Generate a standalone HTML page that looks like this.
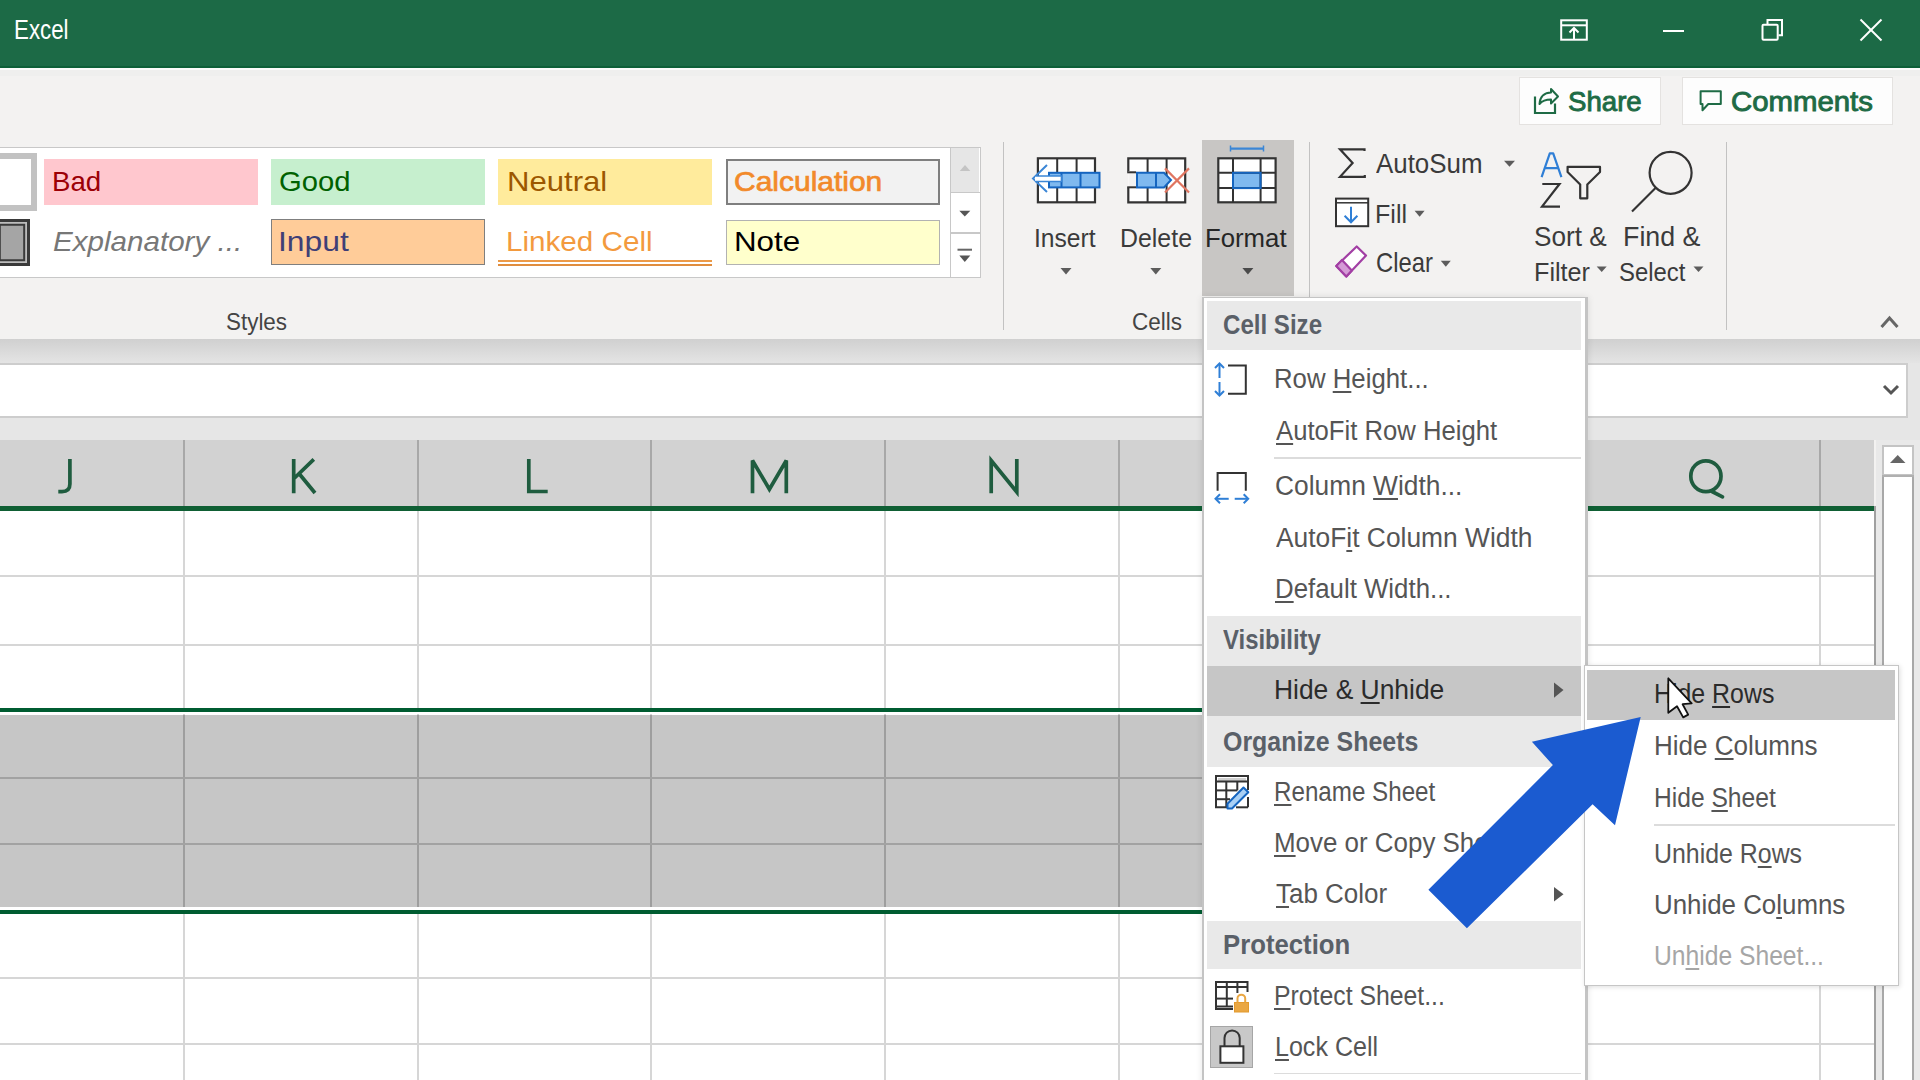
<!DOCTYPE html>
<html><head><meta charset="utf-8"><style>
html,body{margin:0;padding:0;width:1920px;height:1080px;overflow:hidden;background:#f3f2f1;position:relative;font-family:"Liberation Sans",sans-serif;}
.t{position:absolute;white-space:nowrap;transform-origin:0 0;}
u{text-decoration-thickness:2px;text-underline-offset:3px;}
</style></head><body>
<div style="position:absolute;left:0px;top:0px;width:1920px;height:68px;background:#1c6a46;"></div>
<div style="position:absolute;left:0px;top:68px;width:1920px;height:271px;background:#f3f2f1;"></div>
<div style="position:absolute;left:0px;top:65.5px;width:1920px;height:2.8px;background:#0d5f38;"></div>
<div style="position:absolute;left:0px;top:68.3px;width:1920px;height:2px;background:#fbfbfa;"></div>
<div style="position:absolute;left:0px;top:70px;width:1920px;height:6px;background:#efefee;"></div>
<div style="position:absolute;left:0px;top:339px;width:1920px;height:101px;background:#e6e6e6;"></div>
<div style="position:absolute;left:0;top:339px;width:1920px;height:24px;background:linear-gradient(#d0d0d0,#e4e4e4)"></div>
<div style="position:absolute;left:0px;top:363px;width:1908px;height:55px;background:#ffffff;box-sizing:border-box;border:2px solid #cdcdcd;border-left:none;"></div>
<div style="position:absolute;left:0px;top:440px;width:1873.5px;height:640px;background:#ffffff;"></div>
<div style="position:absolute;left:0px;top:714.5px;width:1875px;height:193px;background:#c6c6c6;"></div>
<div style="position:absolute;left:0px;top:440px;width:1873.5px;height:66px;background:#d2d2d2;"></div>
<div style="position:absolute;left:182.8px;top:440px;width:2px;height:66px;background:#a8a8a8;"></div>
<div style="position:absolute;left:182.8px;top:510px;width:2px;height:570px;background:#d6d6d6;"></div>
<div style="position:absolute;left:182.8px;top:714.5px;width:2px;height:193px;background:#9e9e9e;"></div>
<div style="position:absolute;left:416.5px;top:440px;width:2px;height:66px;background:#a8a8a8;"></div>
<div style="position:absolute;left:416.5px;top:510px;width:2px;height:570px;background:#d6d6d6;"></div>
<div style="position:absolute;left:416.5px;top:714.5px;width:2px;height:193px;background:#9e9e9e;"></div>
<div style="position:absolute;left:650.3px;top:440px;width:2px;height:66px;background:#a8a8a8;"></div>
<div style="position:absolute;left:650.3px;top:510px;width:2px;height:570px;background:#d6d6d6;"></div>
<div style="position:absolute;left:650.3px;top:714.5px;width:2px;height:193px;background:#9e9e9e;"></div>
<div style="position:absolute;left:884px;top:440px;width:2px;height:66px;background:#a8a8a8;"></div>
<div style="position:absolute;left:884px;top:510px;width:2px;height:570px;background:#d6d6d6;"></div>
<div style="position:absolute;left:884px;top:714.5px;width:2px;height:193px;background:#9e9e9e;"></div>
<div style="position:absolute;left:1117.8px;top:440px;width:2px;height:66px;background:#a8a8a8;"></div>
<div style="position:absolute;left:1117.8px;top:510px;width:2px;height:570px;background:#d6d6d6;"></div>
<div style="position:absolute;left:1117.8px;top:714.5px;width:2px;height:193px;background:#9e9e9e;"></div>
<div style="position:absolute;left:1351.5px;top:440px;width:2px;height:66px;background:#a8a8a8;"></div>
<div style="position:absolute;left:1351.5px;top:510px;width:2px;height:570px;background:#d6d6d6;"></div>
<div style="position:absolute;left:1351.5px;top:714.5px;width:2px;height:193px;background:#9e9e9e;"></div>
<div style="position:absolute;left:1585.3px;top:440px;width:2px;height:66px;background:#a8a8a8;"></div>
<div style="position:absolute;left:1585.3px;top:510px;width:2px;height:570px;background:#d6d6d6;"></div>
<div style="position:absolute;left:1585.3px;top:714.5px;width:2px;height:193px;background:#9e9e9e;"></div>
<div style="position:absolute;left:1819px;top:440px;width:2px;height:66px;background:#a8a8a8;"></div>
<div style="position:absolute;left:1819px;top:510px;width:2px;height:570px;background:#d6d6d6;"></div>
<div style="position:absolute;left:1819px;top:714.5px;width:2px;height:193px;background:#9e9e9e;"></div>
<div style="position:absolute;left:0px;top:575px;width:1875px;height:2px;background:#d6d6d6;"></div>
<div style="position:absolute;left:0px;top:643.5px;width:1875px;height:2px;background:#d6d6d6;"></div>
<div style="position:absolute;left:0px;top:976.5px;width:1875px;height:2px;background:#d6d6d6;"></div>
<div style="position:absolute;left:0px;top:1043px;width:1875px;height:2px;background:#d6d6d6;"></div>
<div style="position:absolute;left:0px;top:776.5px;width:1875px;height:2px;background:#a2a2a2;"></div>
<div style="position:absolute;left:0px;top:843px;width:1875px;height:2px;background:#a2a2a2;"></div>
<div style="position:absolute;left:0px;top:506px;width:1874px;height:4.5px;background:#0f5f34;"></div>
<div style="position:absolute;left:0px;top:708px;width:1875px;height:4.3px;background:#005c31;"></div>
<div style="position:absolute;left:0px;top:712.3px;width:1875px;height:2.2px;background:#ffffff;"></div>
<div style="position:absolute;left:0px;top:907px;width:1875px;height:2.5px;background:#ffffff;"></div>
<div style="position:absolute;left:0px;top:909.5px;width:1875px;height:4.3px;background:#005c31;"></div>
<div style="position:absolute;left:1873.5px;top:506px;width:2.2px;height:574px;background:#a0a0a0;"></div>
<div style="position:absolute;left:1875.7px;top:440px;width:44.3px;height:640px;background:#e9e9e9;"></div>
<div style="position:absolute;left:1882px;top:444.5px;width:32.2px;height:635.5px;background:#ffffff;box-sizing:border-box;border-left:2px solid #a8a8a8;border-right:2px solid #a8a8a8;"></div>
<div style="position:absolute;left:1882px;top:444.5px;width:32.2px;height:31.5px;background:#ffffff;box-sizing:border-box;border:2px solid #c4c4c4;"></div>
<div style="position:absolute;left:1882px;top:475px;width:32.2px;height:2px;background:#b0b0b0;"></div>
<div style="position:absolute;left:1519px;top:76.5px;width:142px;height:48.5px;background:#fdfdfd;box-sizing:border-box;border:1px solid #e4e2e0;"></div>
<div style="position:absolute;left:1681.5px;top:76.5px;width:211px;height:48.5px;background:#fdfdfd;box-sizing:border-box;border:1px solid #e4e2e0;"></div>
<div style="position:absolute;left:-2px;top:146.5px;width:953px;height:131.5px;background:#ffffff;box-sizing:border-box;border:1.5px solid #c8c8c8;"></div>
<div style="position:absolute;left:949.5px;top:146.5px;width:31px;height:131.5px;background:#ffffff;box-sizing:border-box;border:1.5px solid #c8c8c8;"></div>
<div style="position:absolute;left:951px;top:148px;width:28px;height:43.5px;background:#e6e6e6;"></div>
<div style="position:absolute;left:950px;top:191.5px;width:30px;height:1.5px;background:#c8c8c8;"></div>
<div style="position:absolute;left:950px;top:232px;width:30px;height:1.5px;background:#c8c8c8;"></div>
<div style="position:absolute;left:-6px;top:152.8px;width:42.8px;height:58.7px;background:#ffffff;box-sizing:border-box;border:6px solid #c2c2c2;"></div>
<div style="position:absolute;left:-6px;top:219.2px;width:36.3px;height:46.5px;background:#a5a5a5;box-sizing:border-box;border:3.5px solid #3a3a3a;box-shadow:inset 0 0 0 1.8px #bdbdbd, inset 0 0 0 3.8px #3a3a3a;"></div>
<div style="position:absolute;left:43.75px;top:159.2px;width:214px;height:46.1px;background:#ffc7ce;"></div>
<div style="position:absolute;left:270.8px;top:159.2px;width:214.2px;height:46.1px;background:#c6efce;"></div>
<div style="position:absolute;left:498.4px;top:159.2px;width:214px;height:46.1px;background:#ffeb9c;"></div>
<div style="position:absolute;left:726px;top:159.2px;width:214px;height:46.1px;background:#f2f2f2;box-sizing:border-box;border:2px solid #7f7f7f;"></div>
<div style="position:absolute;left:270.8px;top:219.2px;width:214.2px;height:46.2px;background:#ffcc99;box-sizing:border-box;border:1.5px solid #7f7f7f;"></div>
<div style="position:absolute;left:498.4px;top:260px;width:214px;height:2.2px;background:#ec9a48;"></div>
<div style="position:absolute;left:498.4px;top:263.9px;width:214px;height:2.2px;background:#e08d3e;"></div>
<div style="position:absolute;left:726px;top:219.6px;width:214px;height:45.6px;background:#ffffcc;box-sizing:border-box;border:1.5px solid #b2b2b2;"></div>
<div style="position:absolute;left:1002.5px;top:142px;width:1.5px;height:188px;background:#c2c2c2;"></div>
<div style="position:absolute;left:1308.5px;top:142px;width:1.5px;height:188px;background:#c2c2c2;"></div>
<div style="position:absolute;left:1725.5px;top:142px;width:1.5px;height:188px;background:#c2c2c2;"></div>
<div style="position:absolute;left:1202px;top:139.8px;width:91.5px;height:156.5px;background:#c8c6c4;"></div>
<svg style="position:absolute;left:0;top:0" width="1920" height="1080" viewBox="0 0 1920 1080">
<g fill="none" stroke="#ffffff" stroke-width="2">
 <rect x="1561.2" y="20.3" width="25.6" height="19.4"/>
 <line x1="1561" y1="25.3" x2="1587" y2="25.3"/>
 <line x1="1574" y1="28.5" x2="1574" y2="40"/>
 <polyline points="1569.5,32.5 1574,28 1578.5,32.5"/>
 <line x1="1663" y1="31" x2="1684" y2="31"/>
 <rect x="1762.5" y="24.7" width="15.2" height="15" rx="1"/>
 <polyline points="1767.5,24 1767.5,19.9 1782,19.9 1782,35.3 1778.5,35.3"/>
 <line x1="1860.5" y1="19.5" x2="1881.5" y2="40.5"/>
 <line x1="1881.5" y1="19.5" x2="1860.5" y2="40.5"/>
</g>
<g fill="none" stroke="#1e6b45" stroke-width="2.2">
 <polyline points="1535,96.5 1535,113 1555,113 1555,103.5"/>
 <path d="M1539.5 104 C1540 96 1545 92.5 1551 92.5 L1551 89 L1558 96.5 L1551 103.5 L1551 99.5 C1546 99.5 1542 101 1539.5 104 Z" stroke-width="2" stroke-linejoin="round"/>
 <path d="M1700.6 91.3 L1720.8 91.3 L1720.8 104 L1708.3 104 L1702.5 110.2 L1702.5 104 L1700.6 104 Z" stroke-width="2" stroke-linejoin="round"/>
</g>
<!-- gallery scroll arrows -->
<path d="M959.8 171 L970.3 171 L965 165 Z" fill="#c4c4c4"/>
<path d="M959.3 210.79999999999998 L970.3 210.79999999999998 L964.8 216.4 Z" fill="#555555"/>
<rect x="957.5" y="248.7" width="14.5" height="2" fill="#666"/>
<path d="M959.3 255.5 L970.3 255.5 L964.8 262.1 Z" fill="#555555"/>
<!-- cells dropdown arrows -->
<path d="M1060.5 268.05 L1071.5 268.05 L1066 274.55 Z" fill="#5c5c5c"/>
<path d="M1150.3 268.05 L1161.3 268.05 L1155.8 274.55 Z" fill="#5c5c5c"/>
<path d="M1242.4 268.05 L1253.4 268.05 L1247.9 274.55 Z" fill="#4a4a4a"/>
<!-- Insert icon -->
<g stroke="#333" stroke-width="2.2" fill="#fff">
 <rect x="1037.9" y="158.3" width="57.1" height="44"/>
</g>
<g stroke="#333" stroke-width="2" fill="none">
 <line x1="1057.2" y1="158" x2="1057.2" y2="202.5"/>
 <line x1="1076.6" y1="158" x2="1076.6" y2="202.5"/>
</g>
<rect x="1049" y="172.8" width="50.5" height="14.6" fill="#7fb9ef" stroke="#1565c0" stroke-width="2"/>
<line x1="1061.5" y1="172.5" x2="1061.5" y2="187.5" stroke="#1565c0" stroke-width="2"/>
<line x1="1080.5" y1="172.5" x2="1080.5" y2="187.5" stroke="#1565c0" stroke-width="2"/>
<path d="M1047 165 L1033 178.6 L1047 192" fill="none" stroke="#3b86d6" stroke-width="2"/>
<path d="M1035 176 L1061.5 176 L1061.5 181.5 L1035 181.5" fill="#fff" stroke="#3b86d6" stroke-width="1.6"/>
<!-- Delete icon -->
<g stroke="#333" stroke-width="2.2" fill="#fff">
 <path d="M1128.3 171.8 L1128.3 158.3 L1185.2 158.3 L1185.2 202.3 L1128.3 202.3 L1128.3 187.6" />
</g>
<rect x="1128.5" y="171" width="8" height="17" fill="#f3f2f1" stroke="none"/>
<g stroke="#333" stroke-width="2" fill="none">
 <line x1="1127.2" y1="172.3" x2="1136" y2="172.3"/>
 <line x1="1127.2" y1="187.3" x2="1136" y2="187.3"/>
 <line x1="1147.6" y1="158" x2="1147.6" y2="202.5"/>
 <line x1="1166.6" y1="158" x2="1166.6" y2="202.5"/>
</g>
<path d="M1137 172.8 L1164 172.8 L1171 180 L1164 187.4 L1137 187.4 Z" fill="#7fb9ef" stroke="#1565c0" stroke-width="2"/>
<line x1="1156" y1="172.5" x2="1156" y2="187.5" stroke="#1565c0" stroke-width="2"/>
<g stroke="#e07560" stroke-width="2.2">
 <line x1="1165" y1="168.4" x2="1189" y2="192.5"/>
 <line x1="1189" y1="168.4" x2="1165" y2="192.5"/>
</g>
<!-- Format icon -->
<rect x="1218.3" y="158.3" width="57.3" height="44" fill="#fff" stroke="#333" stroke-width="2.2"/>
<rect x="1233" y="172.8" width="27.6" height="15.3" fill="#7fb9ef"/>
<g stroke="#333" stroke-width="2" fill="none">
 <line x1="1233" y1="158" x2="1233" y2="202.5"/>
 <line x1="1260.6" y1="158" x2="1260.6" y2="202.5"/>
 <line x1="1218" y1="172.8" x2="1276" y2="172.8"/>
 <line x1="1218" y1="188.1" x2="1276" y2="188.1"/>
</g>
<rect x="1233" y="172.8" width="27.6" height="15.3" fill="none" stroke="#1565c0" stroke-width="2"/>
<g stroke="#3b86d6" stroke-width="2.4">
 <line x1="1230.5" y1="148.6" x2="1263.5" y2="148.6"/>
 <line x1="1230.5" y1="145.5" x2="1230.5" y2="151.5" stroke-width="1.5"/>
 <line x1="1263.5" y1="145.5" x2="1263.5" y2="151.5" stroke-width="1.5"/>
</g>
<!-- AutoSum sigma -->
<path d="M1364.5 151 L1364.5 149.3 L1340 149.3 L1352.6 163 L1340 176.8 L1364.8 176.8 L1364.8 175" fill="none" stroke="#333" stroke-width="2.2" stroke-linejoin="miter"/>
<path d="M1504.0 160.8 L1515.0 160.8 L1509.5 166.8 Z" fill="#5c5c5c"/>
<!-- Fill icon -->
<rect x="1336" y="198.6" width="32.2" height="27.6" fill="#fff" stroke="#333" stroke-width="2"/>
<line x1="1336" y1="202.8" x2="1368" y2="202.8" stroke="#333" stroke-width="1.5"/>
<g stroke="#2f7fd6" stroke-width="2" fill="none">
 <line x1="1351" y1="206.7" x2="1351" y2="222"/>
 <polyline points="1344.6,215.7 1351,222.2 1357.4,215.7"/>
</g>
<path d="M1414.6 210.7 L1424.6 210.7 L1419.6 216.7 Z" fill="#5c5c5c"/>
<!-- Clear eraser -->
<path d="M1356.7 246.5 L1366 255.6 L1346.3 276.5 L1336.3 266 Z" fill="#fff" stroke="#a23fa4" stroke-width="2.2" stroke-linejoin="round"/>
<path d="M1342 260 L1351.8 270.5 L1346.3 276.5 L1336.3 266 Z" fill="#d49bd6" stroke="#a23fa4" stroke-width="2.2" stroke-linejoin="round"/>
<path d="M1440.8 260.7 L1450.8 260.7 L1445.8 266.7 Z" fill="#5c5c5c"/>
<!-- Sort & Filter -->
<path d="M1541.6 177.2 L1549.8 153.3 L1553.2 153.3 L1561.4 177.2 M1544.8 168.2 L1558.2 168.2" fill="none" stroke="#2f7fd6" stroke-width="2.2" stroke-linejoin="round"/>
<path d="M1542.3 184 L1559.5 184 L1542 206.6 L1560 206.6" fill="none" stroke="#333" stroke-width="2.2"/>
<path d="M1567.6 166.8 L1600 166.8 L1600 172 L1587.3 184.5 L1587.3 198.3 L1580.2 198.3 L1580.2 184.5 L1567.6 172 Z" fill="none" stroke="#333" stroke-width="2.2" stroke-linejoin="round"/>
<path d="M1596.7 266.55 L1606.7 266.55 L1601.7 272.05 Z" fill="#5c5c5c"/>
<!-- Find & Select -->
<circle cx="1670.6" cy="172.8" r="21" fill="none" stroke="#333" stroke-width="2.2"/>
<line x1="1656" y1="187.5" x2="1632" y2="211.5" stroke="#333" stroke-width="2.2"/>
<path d="M1693.5 266.55 L1703.5 266.55 L1698.5 272.05 Z" fill="#5c5c5c"/>
<!-- collapse ribbon -->
<polyline points="1881.5,327 1889.5,318 1897.5,327" fill="none" stroke="#666" stroke-width="3"/>
<!-- formula chevron -->
<polyline points="1884,386 1891,393 1898,386" fill="none" stroke="#555" stroke-width="3"/>
<!-- scrollbar up -->
<path d="M1890 463 L1905.5 463 L1897.7 455 Z" fill="#666"/>
</svg>
<svg style="position:absolute;left:0;top:0" width="1920" height="1080" viewBox="0 0 1920 1080">
<g fill="none" stroke="#1f5c3f" stroke-width="3.7" stroke-linejoin="miter" stroke-miterlimit="3">
 <path d="M69.9 459 L69.9 484 Q69.9 491.6 62 491.6 L58.3 491.6"/>
 <path d="M293.7 459 L293.7 493.3 M313.8 459.3 L294.5 478 M299 473.5 L315 493"/>
 <path d="M528.8 459 L528.8 491.5 L547.7 491.5"/>
 <path d="M752.5 493.3 L752.5 460.5 L769.4 489.3 L786.3 460.5 L786.3 493.3"/>
 <path d="M991.2 493.3 L991.2 460.5 L1016.8 492 L1016.8 459"/>
 <ellipse cx="1705.9" cy="476.2" rx="15.1" ry="15.4"/>
 <path d="M1712 491.5 L1722.5 496.8" stroke-linecap="round"/>
</g>
</svg>
<div class="t" id="t0" style="left:14.01px;top:15.70px;font-size:28.12px;line-height:28.12px;color:#ffffff;transform:scaleX(0.7940);">Excel</div>
<div class="t" id="t1" style="left:1567.90px;top:88.31px;font-size:27.54px;line-height:27.54px;color:#1e6b45;transform:scaleX(1.0032);-webkit-text-stroke:0.9px #1e6b45;">Share</div>
<div class="t" id="t2" style="left:1730.93px;top:88.31px;font-size:27.54px;line-height:27.54px;color:#1e6b45;transform:scaleX(1.0665);-webkit-text-stroke:0.9px #1e6b45;">Comments</div>
<div class="t" id="t3" style="left:51.79px;top:167.91px;font-size:27.54px;line-height:27.54px;color:#9c0006;transform:scaleX(1.0054);">Bad</div>
<div class="t" id="t4" style="left:278.94px;top:167.91px;font-size:27.54px;line-height:27.54px;color:#006100;transform:scaleX(1.0614);">Good</div>
<div class="t" id="t5" style="left:506.74px;top:167.91px;font-size:27.54px;line-height:27.54px;color:#9c5700;transform:scaleX(1.1287);">Neutral</div>
<div class="t" id="t6" style="left:733.51px;top:167.91px;font-size:27.54px;line-height:27.54px;color:#f28a2a;transform:scaleX(1.0887);-webkit-text-stroke:0.7px #f28a2a;">Calculation</div>
<div class="t" id="t7" style="left:53.40px;top:227.91px;font-size:27.54px;line-height:27.54px;color:#777777;font-style:italic;transform:scaleX(1.0748);">Explanatory ...</div>
<div class="t" id="t8" style="left:278.39px;top:227.91px;font-size:27.54px;line-height:27.54px;color:#3f3f76;transform:scaleX(1.1553);">Input</div>
<div class="t" id="t9" style="left:505.85px;top:227.91px;font-size:27.54px;line-height:27.54px;color:#f39a3e;transform:scaleX(1.0766);">Linked Cell</div>
<div class="t" id="t10" style="left:733.62px;top:227.91px;font-size:27.54px;line-height:27.54px;color:#000000;transform:scaleX(1.1376);">Note</div>
<div class="t" id="t11" style="left:225.79px;top:310.41px;font-size:24.78px;line-height:24.78px;color:#444444;transform:scaleX(0.9053);">Styles</div>
<div class="t" id="t12" style="left:1033.89px;top:224.50px;font-size:26.52px;line-height:26.52px;color:#3b3b3b;transform:scaleX(0.9292);">Insert</div>
<div class="t" id="t13" style="left:1120.12px;top:224.50px;font-size:26.52px;line-height:26.52px;color:#3b3b3b;transform:scaleX(0.9391);">Delete</div>
<div class="t" id="t14" style="left:1205.46px;top:224.50px;font-size:26.52px;line-height:26.52px;color:#262626;transform:scaleX(0.9709);">Format</div>
<div class="t" id="t15" style="left:1131.59px;top:310.22px;font-size:24.64px;line-height:24.64px;color:#444444;transform:scaleX(0.9126);">Cells</div>
<div class="t" id="t16" style="left:1376.00px;top:150.30px;font-size:27.10px;line-height:27.10px;color:#3b3b3b;transform:scaleX(0.9556);">AutoSum</div>
<div class="t" id="t17" style="left:1375.11px;top:200.81px;font-size:26.52px;line-height:26.52px;color:#3b3b3b;transform:scaleX(0.9458);">Fill</div>
<div class="t" id="t18" style="left:1376.12px;top:250.01px;font-size:26.96px;line-height:26.96px;color:#3b3b3b;transform:scaleX(0.8833);">Clear</div>
<div class="t" id="t19" style="left:1534.03px;top:224.26px;font-size:26.96px;line-height:26.96px;color:#3b3b3b;transform:scaleX(0.9704);">Sort &amp;</div>
<div class="t" id="t20" style="left:1533.91px;top:258.81px;font-size:26.67px;line-height:26.67px;color:#3b3b3b;transform:scaleX(0.9449);">Filter</div>
<div class="t" id="t21" style="left:1623.31px;top:224.26px;font-size:26.96px;line-height:26.96px;color:#3b3b3b;transform:scaleX(0.9949);">Find &amp;</div>
<div class="t" id="t22" style="left:1619.10px;top:258.81px;font-size:26.67px;line-height:26.67px;color:#3b3b3b;transform:scaleX(0.8958);">Select</div>
<div style="position:absolute;left:1201.5px;top:296.5px;width:386.5px;height:800px;background:#ffffff;box-sizing:border-box;border:1.5px solid #c4c4c4;border-left-width:2.5px;border-right-width:3px;box-shadow:0 0 7px rgba(0,0,0,0.10);"></div>
<div style="position:absolute;left:1206.8px;top:300.7px;width:374.5px;height:49px;background:#e9e9e9;"></div>
<div style="position:absolute;left:1206.8px;top:615.9px;width:374.5px;height:49.8px;background:#e9e9e9;"></div>
<div style="position:absolute;left:1206.8px;top:665.7px;width:374.5px;height:50.3px;background:#c6c6c6;"></div>
<div style="position:absolute;left:1206.8px;top:716px;width:374.5px;height:50.5px;background:#e9e9e9;"></div>
<div style="position:absolute;left:1206.8px;top:920.5px;width:374.5px;height:48.3px;background:#e9e9e9;"></div>
<div style="position:absolute;left:1274px;top:457px;width:307px;height:1.5px;background:#dcdcdc;"></div>
<div style="position:absolute;left:1274px;top:1072.5px;width:307px;height:1.5px;background:#dcdcdc;"></div>
<div style="position:absolute;left:1210.3px;top:1026px;width:42.7px;height:41.6px;background:#c8c8c8;box-sizing:border-box;border:1.5px solid #a6a6a6;"></div>
<div style="position:absolute;left:1583.5px;top:665px;width:315px;height:320.5px;background:#ffffff;box-sizing:border-box;border:1.5px solid #c6c6c6;box-shadow:1px 1px 5px rgba(0,0,0,0.13);"></div>
<div style="position:absolute;left:1586.8px;top:670px;width:308px;height:49.7px;background:#c6c6c6;"></div>
<div style="position:absolute;left:1653.5px;top:824.2px;width:241px;height:1.5px;background:#dcdcdc;"></div>
<svg style="position:absolute;left:0;top:0" width="1920" height="1080" viewBox="0 0 1920 1080">
<!-- submenu arrows -->
<path d="M1554 682.5 L1563.5 690 L1554 697.8 Z" fill="#555"/>
<path d="M1554 887 L1563.5 894.3 L1554 901.5 Z" fill="#555"/>
<!-- row height icon -->
<polyline points="1228,365.4 1245.8,365.4 1245.8,393.8 1228,393.8" fill="none" stroke="#333" stroke-width="2"/>
<g stroke="#2f7fd6" stroke-width="2" fill="none">
 <line x1="1219.5" y1="364" x2="1219.5" y2="378"/>
 <line x1="1219.5" y1="382" x2="1219.5" y2="395"/>
 <polyline points="1215,368 1219.5,363.5 1224,368"/>
 <polyline points="1215,391 1219.5,395.5 1224,391"/>
</g>
<!-- column width icon -->
<polyline points="1217.6,490.7 1217.6,472.9 1245.8,472.9 1245.8,490.7" fill="none" stroke="#333" stroke-width="2"/>
<g stroke="#2f7fd6" stroke-width="2" fill="none">
 <line x1="1216" y1="498.8" x2="1228.7" y2="498.8"/>
 <line x1="1234.7" y1="498.8" x2="1248" y2="498.8"/>
 <polyline points="1220,494.3 1215.5,498.8 1220,503.3"/>
 <polyline points="1243.7,494.3 1248.2,498.8 1243.7,503.3"/>
</g>
<!-- rename sheet icon -->
<rect x="1218" y="778" width="28" height="3" fill="#d0d0d0"/>
<g fill="none" stroke="#333" stroke-width="2">
 <path d="M1248 790 L1248 776 L1216 776 L1216 807.3 L1227 807.3"/>
 <line x1="1248" y1="797" x2="1248" y2="807.3"/>
 <line x1="1236" y1="807.3" x2="1248" y2="807.3"/>
 <line x1="1216" y1="781.5" x2="1248" y2="781.5"/>
 <line x1="1216" y1="790.4" x2="1237.3" y2="790.4"/>
 <line x1="1216" y1="799.2" x2="1230" y2="799.2"/>
 <line x1="1226.3" y1="781.5" x2="1226.3" y2="807"/>
 <line x1="1237.3" y1="781.5" x2="1237.3" y2="790.4"/>
</g>
<path d="M1243.5 787.5 L1248.3 792.3 L1232 808.5 L1227.5 808.5 L1227.5 803.8 Z" fill="#a9d0f5" stroke="#1565c0" stroke-width="2" stroke-linejoin="round"/>
<!-- protect sheet icon -->
<g fill="none" stroke="#333" stroke-width="2">
 <path d="M1233 1009 L1216 1009 L1216 982 L1247.5 982 L1247.5 992"/>
 <line x1="1216" y1="987" x2="1247.5" y2="987"/>
 <line x1="1216" y1="998.6" x2="1233" y2="998.6"/>
 <line x1="1216" y1="1006.5" x2="1233" y2="1006.5"/>
 <line x1="1226.8" y1="982" x2="1226.8" y2="1006.5"/>
 <line x1="1237.4" y1="982" x2="1237.4" y2="993"/>
</g>
<rect x="1234.5" y="1002.5" width="14" height="9.5" fill="#eaa743" stroke="#e39a2e" stroke-width="1"/>
<path d="M1237.5 1002.5 L1237.5 998.5 A3.8 3.8 0 0 1 1245.2 998.5 L1245.2 1002.5" fill="none" stroke="#eaa743" stroke-width="2"/>
<!-- lock cell icon -->
<path d="M1224.5 1046 L1224.5 1038 A7.6 7.6 0 0 1 1239.7 1038 L1239.7 1046" fill="none" stroke="#333" stroke-width="2"/>
<rect x="1220.4" y="1046.3" width="23" height="16.5" fill="#fff" stroke="#333" stroke-width="2"/>
</svg>
<div class="t" id="t23" style="left:1222.53px;top:311.41px;font-size:27.54px;line-height:27.54px;color:#5a6068;font-weight:bold;transform:scaleX(0.8747);">Cell Size</div>
<div class="t" id="t24" style="left:1273.62px;top:364.91px;font-size:27.39px;line-height:27.39px;color:#555555;transform:scaleX(0.9414);">Row <u>H</u>eight...</div>
<div class="t" id="t25" style="left:1275.50px;top:416.60px;font-size:27.39px;line-height:27.39px;color:#555555;transform:scaleX(0.9377);"><u>A</u>utoFit Row Height</div>
<div class="t" id="t26" style="left:1274.54px;top:471.91px;font-size:27.39px;line-height:27.39px;color:#555555;transform:scaleX(0.9624);">Column <u>W</u>idth...</div>
<div class="t" id="t27" style="left:1275.50px;top:523.60px;font-size:27.39px;line-height:27.39px;color:#555555;transform:scaleX(0.9630);">AutoF<u>i</u>t Column Width</div>
<div class="t" id="t28" style="left:1274.71px;top:575.41px;font-size:27.39px;line-height:27.39px;color:#555555;transform:scaleX(0.9432);"><u>D</u>efault Width...</div>
<div class="t" id="t29" style="left:1223.00px;top:626.41px;font-size:27.54px;line-height:27.54px;color:#5a6068;font-weight:bold;transform:scaleX(0.8681);">Visibility</div>
<div class="t" id="t30" style="left:1274.17px;top:676.41px;font-size:27.39px;line-height:27.39px;color:#2b2b2b;transform:scaleX(0.9645);">Hide &amp; <u>U</u>nhide</div>
<div class="t" id="t31" style="left:1223.49px;top:727.60px;font-size:27.54px;line-height:27.54px;color:#5a6068;font-weight:bold;transform:scaleX(0.9057);">Organize Sheets</div>
<div class="t" id="t32" style="left:1273.73px;top:778.41px;font-size:27.39px;line-height:27.39px;color:#555555;transform:scaleX(0.8828);"><u>R</u>ename Sheet</div>
<div class="t" id="t33" style="left:1273.61px;top:829.20px;font-size:27.39px;line-height:27.39px;color:#555555;transform:scaleX(0.9470);"><u>M</u>ove or Copy Sheet...</div>
<div class="t" id="t34" style="left:1275.50px;top:880.00px;font-size:27.39px;line-height:27.39px;color:#555555;transform:scaleX(0.9484);"><u>T</u>ab Color</div>
<div class="t" id="t35" style="left:1223.27px;top:931.10px;font-size:27.54px;line-height:27.54px;color:#5a6068;font-weight:bold;transform:scaleX(0.9348);">Protection</div>
<div class="t" id="t36" style="left:1273.59px;top:981.81px;font-size:27.39px;line-height:27.39px;color:#555555;transform:scaleX(0.9056);"><u>P</u>rotect Sheet...</div>
<div class="t" id="t37" style="left:1274.77px;top:1032.60px;font-size:27.39px;line-height:27.39px;color:#555555;transform:scaleX(0.9150);"><u>L</u>ock Cell</div>
<div class="t" id="t38" style="left:1654.28px;top:680.20px;font-size:27.39px;line-height:27.39px;color:#2b2b2b;transform:scaleX(0.9092);">Hide <u>R</u>ows</div>
<div class="t" id="t39" style="left:1654.20px;top:732.10px;font-size:27.39px;line-height:27.39px;color:#555555;transform:scaleX(0.9507);">Hide <u>C</u>olumns</div>
<div class="t" id="t40" style="left:1654.30px;top:784.00px;font-size:27.39px;line-height:27.39px;color:#555555;transform:scaleX(0.8988);">Hide <u>S</u>heet</div>
<div class="t" id="t41" style="left:1654.28px;top:839.60px;font-size:27.39px;line-height:27.39px;color:#555555;transform:scaleX(0.9093);">Unhide R<u>o</u>ws</div>
<div class="t" id="t42" style="left:1654.21px;top:890.81px;font-size:27.39px;line-height:27.39px;color:#555555;transform:scaleX(0.9450);">Unhide Co<u>l</u>umns</div>
<div class="t" id="t43" style="left:1654.30px;top:942.20px;font-size:27.39px;line-height:27.39px;color:#a6a6a6;transform:scaleX(0.9006);">Un<u>h</u>ide Sheet...</div>
<svg style="position:absolute;left:0;top:0" width="1920" height="1080" viewBox="0 0 1920 1080">
<path d="M1640.7 717 L1615 825.3 L1592.6 804.3 L1466.9 928.3 L1428.4 889.8 L1552.9 765.1 L1531.9 741.8 Z" fill="#1b5bd0"/>
<path d="M1668.3 678.3 L1668.3 712.8 L1677 706.2 L1683.2 717.4 L1688.2 714.6 L1682.6 704.2 L1691.7 703.3 Z" fill="#fff" stroke="#111" stroke-width="1.8" stroke-linejoin="round"/>
</svg>
</body></html>
